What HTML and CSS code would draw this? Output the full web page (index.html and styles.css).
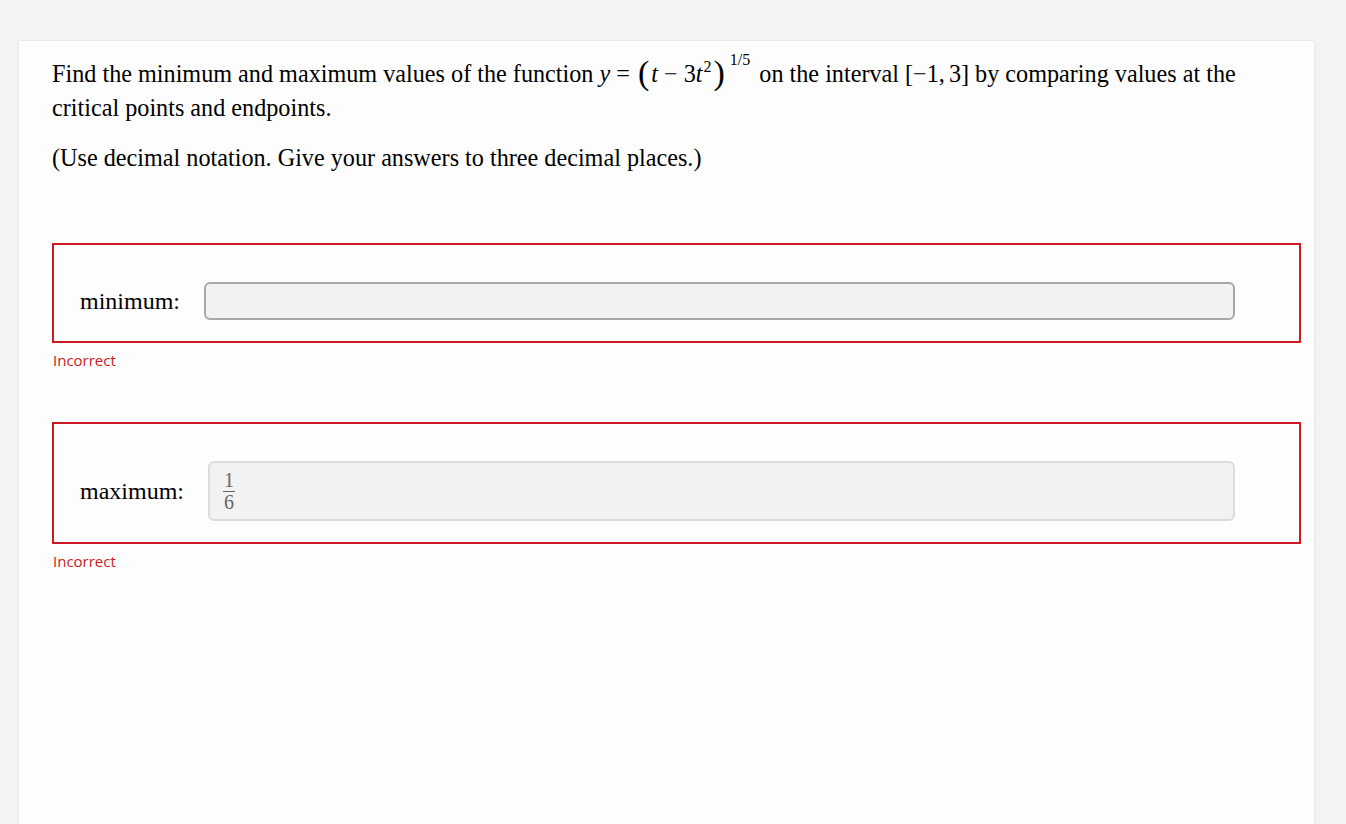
FILE: index.html
```html
<!DOCTYPE html>
<html lang="en">
<head>
    <meta charset="UTF-8">
    <meta name="viewport" content="width=device-width, initial-scale=1.0">
    <title>Question</title>
    <link rel="stylesheet" href="styles.css">
</head>
<body>

    <div class="card">
        <p class="prompt">Find the minimum and maximum values of the function <span class="math"><i>y</i><span class="op">=</span><span class="paren">(</span><i>t</i><span class="op">−</span>3<i>t</i><sup>2</sup><span class="paren">)</span><sup class="exp">1/5</sup></span> on the interval <span class="math">[−1,<span class="thin"></span>3]</span> by comparing values at the critical points and endpoints.</p>
        <p class="prompt">(Use decimal notation. Give your answers to three decimal places.)</p>

        <div class="answer">
            <div class="answer-box">
                <label class="answer-label">minimum:</label>
                <div class="answer-input"></div>
            </div>
            <p class="feedback">Incorrect</p>
        </div>

        <div class="answer">
            <div class="answer-box">
                <label class="answer-label">maximum:</label>
                <div class="answer-input answer-input-filled">
                    <span class="frac"><span class="num">1</span><span class="den">6</span></span>
                </div>
            </div>
            <p class="feedback">Incorrect</p>
        </div>
    </div>

</body>
</html>
```

FILE: styles.css
```css
body {
    margin: 0;
    background-color: #f3f3f3;
    font-family: "Liberation Serif", "Times New Roman", serif;
    color: #000;
}
.card {
    margin: 41px 0 0 19px;
    width: 1249px;
    min-height: 783px;
    padding: 16px 13px 0 33px;
    background: #fdfdfd;
    box-shadow: 0 0 2px rgba(0, 0, 0, 0.12);
}
.prompt {
    font-size: 24.2px;
    line-height: 34px;
    margin: 0 0 16px;
    padding-right: 20px;
}
.math { white-space: nowrap; }
.math .op { margin: 0 6px; }
.math .thin { margin-right: 4px; }
.paren {
    font-size: 34px;
    line-height: 0;
    position: relative;
    top: 2px;
    margin: 0 2px;
}
.math sup {
    font-size: 16px;
    line-height: 0;
    vertical-align: 10px;
    margin-left: 1px;
}
.math sup.exp {
    font-size: 16px;
    vertical-align: 17px;
    margin-left: 3px;
    margin-right: 3px;
}

/* Answer blocks */
.answer { margin-top: 68px; }
.answer + .answer { margin-top: 52px; }
.answer-box {
    display: flex;
    align-items: center;
    gap: 24px;
    border: 2px solid #cc1a25;
    padding: 37px 64px 21px 26px;
}
.answer-label {
    font-size: 24px;
}
.answer-input {
    flex: 1;
    height: 34px;
    border: 2px solid #a8a8a8;
    border-radius: 6px;
    background: #f2f2f2;
}
.answer-input-filled {
    height: 56px;
    border-color: #dcdcdc;
    display: flex;
    align-items: center;
    padding-left: 13px;
}
.frac {
    display: inline-flex;
    flex-direction: column;
    align-items: center;
    color: #666;
    font-size: 20px;
    line-height: 21px;
}
.frac .num {
    border-bottom: 1px solid #666;
    padding: 0 1px;
}
.feedback {
    margin: 7px 0 0 1px;
    font-family: "Open Sans", sans-serif;
    font-size: 15px;
    line-height: 20px;
    color: #cc1a25;
}
```
